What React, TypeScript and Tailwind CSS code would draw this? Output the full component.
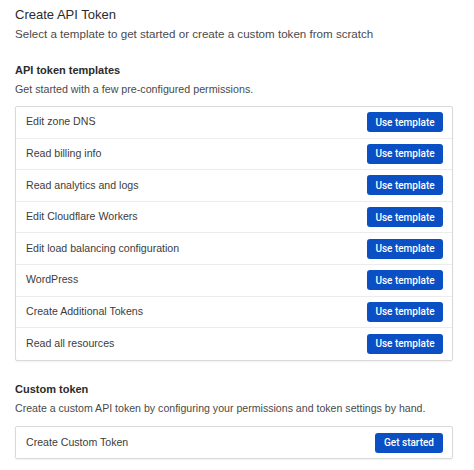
const templates = [
  'Edit zone DNS',
  'Read billing info',
  'Read analytics and logs',
  'Edit Cloudflare Workers',
  'Edit load balancing configuration',
  'WordPress',
  'Create Additional Tokens',
  'Read all resources',
];

const Row = ({
  label,
  action,
  width,
  last,
}: {
  label: string;
  action: string;
  width: string;
  last?: boolean;
}) => (
  <div
    className={`flex h-[31.6px] items-center justify-between pl-[10px] pr-[9px] ${
      last ? '' : 'border-b border-[#ececec]'
    }`}
  >
    <span className="text-[10.6px] text-[#3c3c3c]">{label}</span>
    <button
      className={`${width} h-[20px] rounded-[3px] bg-[#0a50c4] font-['Roboto',sans-serif] text-[10px] font-medium text-white`}
    >
      {action}
    </button>
  </div>
);

export default function App() {
  return (
    <div
      className="min-h-[470px] w-[474px] bg-white pl-[15px] pr-[21px] pt-[5px]"
      style={{ fontFamily: '"Liberation Sans", Arial, sans-serif' }}
    >
      <h1 className="text-[13px] font-medium leading-[20px] text-[#2b2b2b]">Create API Token</h1>
      <p className="mt-[1px] text-[11.6px] leading-[16px] text-[#4a4a4a]">
        Select a template to get started or create a custom token from scratch
      </p>

      <h2 className="mt-[20px] text-[11px] font-bold leading-[16px] text-[#2b2b2b]">API token templates</h2>
      <p className="mt-[3px] text-[10.7px] leading-[16px] text-[#4a4a4a]">
        Get started with a few pre-configured permissions.
      </p>

      <div className="mt-[9px] rounded-[2px] border border-[#dadada] shadow-[0_1px_2px_rgba(0,0,0,0.06)]">
        {templates.map((t, i) => (
          <Row
            key={t}
            label={t}
            action="Use template"
            width="w-[76px]"
            last={i === templates.length - 1}
          />
        ))}
      </div>

      <h2 className="mt-[20px] text-[11px] font-bold leading-[16px] text-[#2b2b2b]">Custom token</h2>
      <p className="mt-[3px] text-[10.6px] leading-[16px] text-[#4a4a4a]">
        Create a custom API token by configuring your permissions and token settings by hand.
      </p>

      <div className="mt-[10px] rounded-[2px] border border-[#dadada] shadow-[0_1px_2px_rgba(0,0,0,0.06)]">
        <Row label="Create Custom Token" action="Get started" width="w-[68px]" last />
      </div>
    </div>
  );
}
